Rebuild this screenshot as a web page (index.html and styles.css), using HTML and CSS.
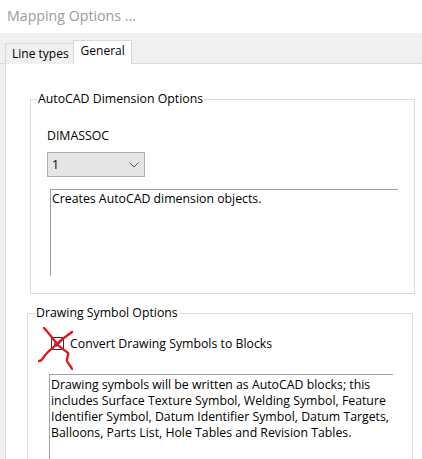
FILE: index.html
```html
<!DOCTYPE html>
<html>
<head>
<meta charset="utf-8">
<link rel="stylesheet" href="styles.css">
</head>
<body>
<div class="window">
  <div class="title">Mapping Options ...</div>
  <div class="tabbar">
    <div class="tab">Line types</div>
    <div class="tab active">General</div>
  </div>
  <div class="body">
    <div class="pane">
      <fieldset class="group g1">
        <legend>AutoCAD Dimension Options</legend>
        <div class="label">DIMASSOC</div>
        <div class="select">
          <span>1</span>
          <svg class="chev" width="10" height="6" viewBox="0 0 10 6"><path d="M0.5 0.5 L5 5 L9.5 0.5" fill="none" stroke="#5a5a5a" stroke-width="1"/></svg>
        </div>
        <div class="textbox t1">Creates AutoCAD dimension objects.</div>
      </fieldset>
      <fieldset class="group g2">
        <legend>Drawing Symbol Options</legend>
        <div class="checkrow">
          <span class="checkbox">
            <svg width="11" height="11" viewBox="0 0 11 11"><path d="M2 5.5 L4.5 8 L9 3" fill="none" stroke="#333" stroke-width="1.4"/></svg>
            <svg class="redx" width="38" height="44" viewBox="0 0 38 44"><path d="M6 1 C10 5 15 12 20 18 C24 22 28 24 30 26 C31 29 28 31 29 34 C30 37 33 39 34 42" fill="none" stroke="#e8101a" stroke-width="2.3" stroke-linecap="round"/><path d="M34 5 C30 8 24 12 20 16 C16 20 12 23 9 26 C7 28 6 30 5 31 C4 33 2 34 1 34" fill="none" stroke="#e8101a" stroke-width="2.3" stroke-linecap="round"/></svg>
          </span>
          <span class="checklabel">Convert Drawing Symbols to Blocks</span>
        </div>
        <div class="textbox t2">Drawing symbols will be written as AutoCAD blocks; this includes Surface Texture Symbol, Welding Symbol, Feature Identifier Symbol, Datum Identifier Symbol, Datum Targets, Balloons, Parts List, Hole Tables and Revision Tables.</div>
      </fieldset>
    </div>
  </div>
</div>
</body>
</html>
```
FILE: styles.css
```css
html, body {
  margin: 0;
  padding: 0;
  background: #ffffff;
}
.window {
  width: 422px;
  height: 459px;
  overflow: hidden;
  font-family: "Open Sans", "Noto Sans", sans-serif;
  font-size: 12.3px;
  color: #000;
  display: flex;
  flex-direction: column;
}
.title {
  height: 33px;
  line-height: 32px;
  padding-left: 7px;
  font-size: 14.2px;
  color: #9b9b9b;
  flex: none;
}
.tabbar {
  height: 30px;
  background: #f0f0f0;
  border-bottom: 1px solid #d9d9d9;
  display: flex;
  align-items: flex-end;
  padding-left: 5px;
  flex: none;
}
.tab {
  line-height: 20px;
  border: 1px solid #d9d9d9;
  border-bottom: none;
  padding: 0 4px 0 6px;
  margin-bottom: -1px;
  background: #f0f0f0;
  height: 20px;
  font-size: 12px;
}
.tab.active {
  background: #ffffff;
  height: 23px;
  line-height: 20px;
  margin-left: -1px;
  padding: 0 6px 0 7px;
}
.body {
  flex: 1;
  background: #f0f0f0;
  padding-left: 5px;
  display: flex;
}
.pane {
  flex: 1;
  background: #ffffff;
  border-left: 1px solid #d9d9d9;
  padding-top: 27px;
}
.group {
  margin: 0;
  border: 1px solid #dcdcdc;
  padding: 0;
  min-width: 0;
}
.group legend {
  padding: 0 1px;
  line-height: 16px;
}
.g1 {
  margin-left: 24px;
  width: 383px;
  height: 201px;
}
.g1 legend {
  margin-left: 6px;
}
.label {
  margin: 21px 0 0 16px;
  line-height: 16px;
}
.select {
  margin: 8px 0 0 16px;
  background: #e5e5e5;
  border: 1px solid #adadad;
  display: flex;
  align-items: center;
  justify-content: space-between;
  padding: 0 5px 0 4px;
  box-sizing: border-box;
  width: 98px;
  height: 25px;
}
.chev {
  display: block;
}
.textbox {
  border-top: 1px solid #a0a0a0;
  border-left: 1px solid #a0a0a0;
  padding: 0 0 0 1px;
  line-height: 16px;
}
.t1 {
  margin: 12px 0 0 19px;
  width: 346px;
  height: 85px;
  padding-top: 1px;
}
.g2 {
  margin: 11px 0 0 21px;
  width: 384px;
  height: 200px;
}
.g2 legend {
  margin-left: 7px;
}
.checkrow {
  display: flex;
  align-items: center;
  margin: 15px 0 0 23px;
  height: 15px;
}
.checkbox {
  position: relative;
  width: 11px;
  height: 11px;
  border: 1px solid #333;
  display: inline-block;
  flex: none;
}
.checkbox svg {
  display: block;
}
.checkbox .redx {
  position: absolute;
  left: -14px;
  top: -11px;
}
.checklabel {
  margin-left: 6px;
  line-height: 16px;
}
.t2 {
  margin: 23px 0 0 21px;
  width: 342px;
  height: 100px;
  padding-top: 2px;
}
```
